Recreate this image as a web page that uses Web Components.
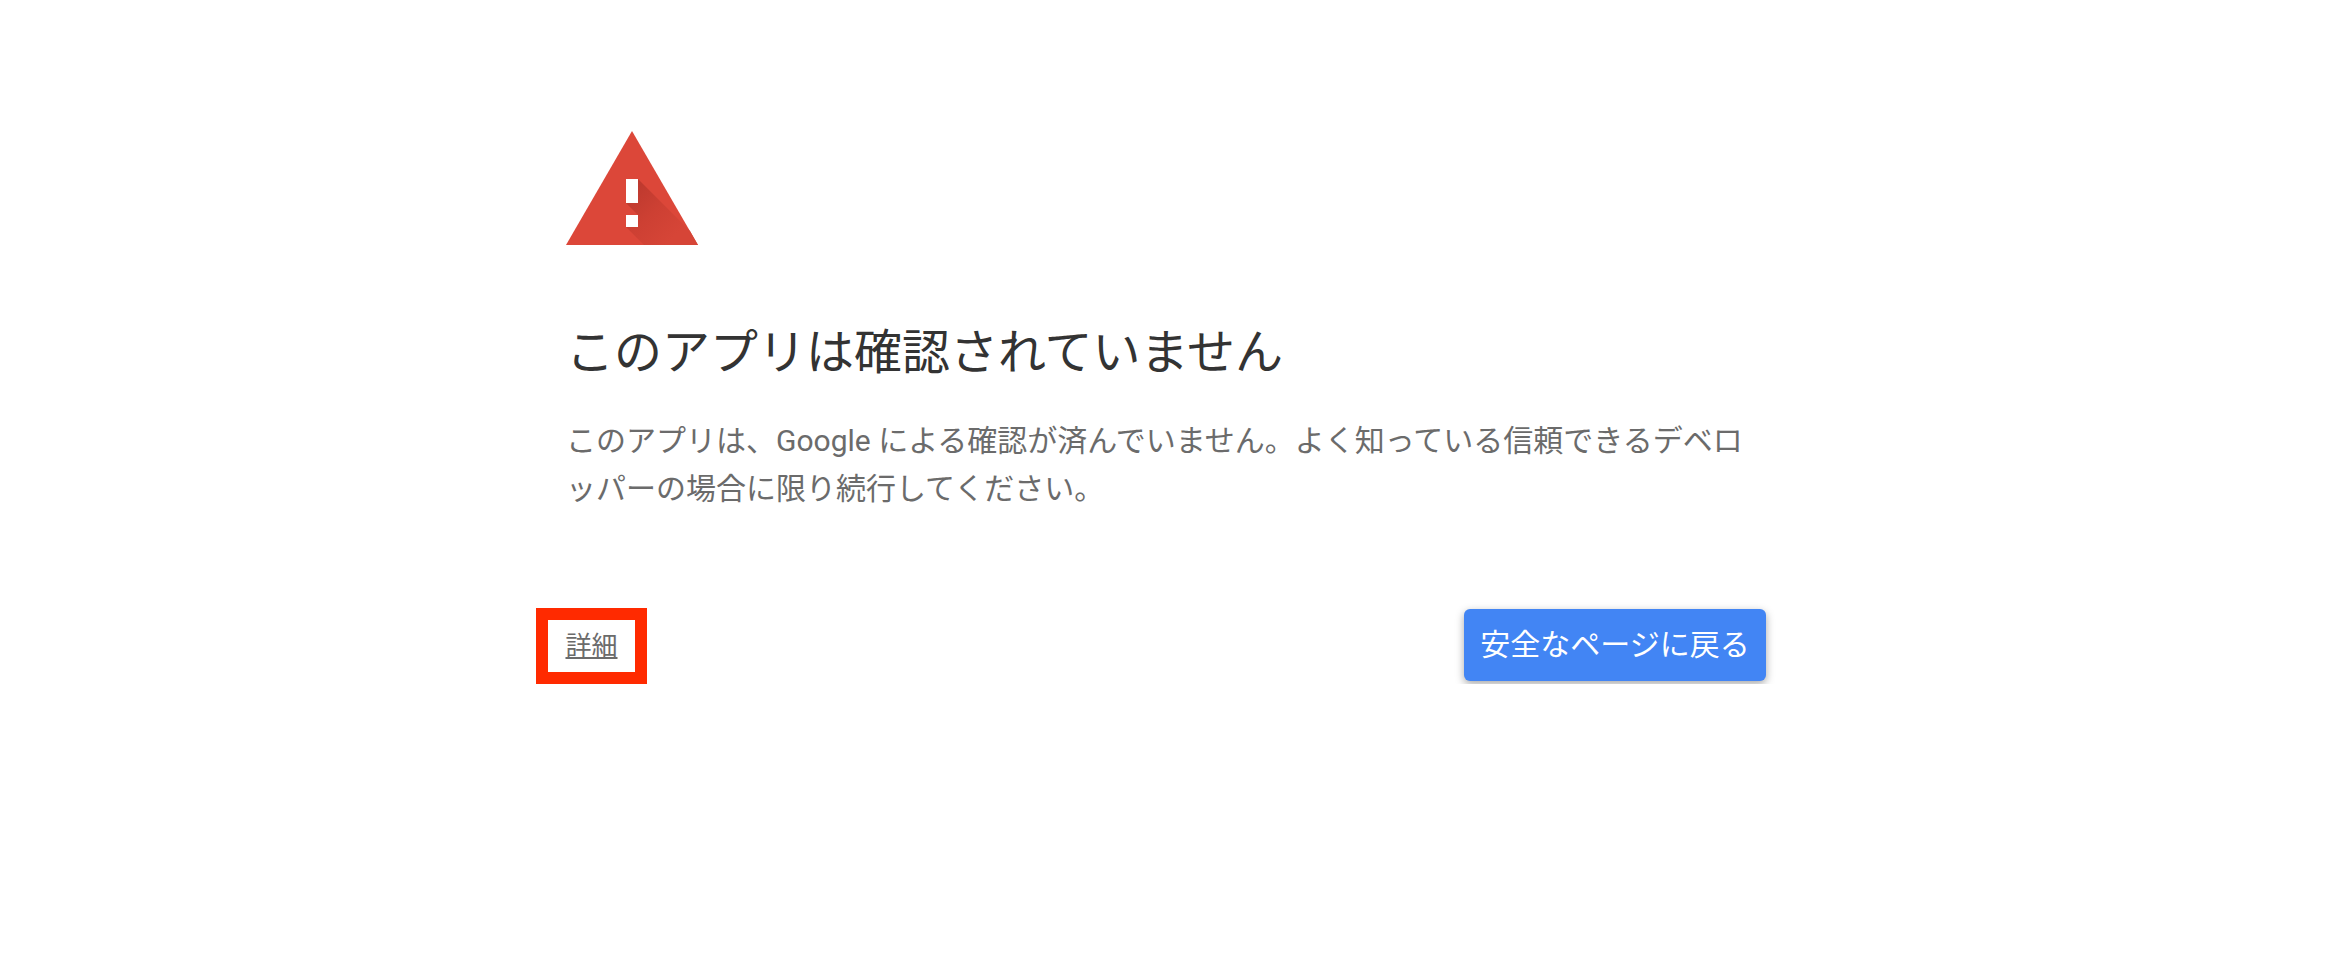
<!DOCTYPE html>
<html lang="ja">
<head>
<meta charset="utf-8">
<title>このアプリは確認されていません</title>
<style>
  html, body { margin: 0; background: #fff; }
  body { font-family: Roboto, "Noto Sans CJK JP", sans-serif; }
</style>
</head>
<body>
<consent-screen>
  <warning-icon slot="icon"></warning-icon>
  <span slot="title">このアプリは確認されていません</span>
  <span slot="message">このアプリは、Google による確認が済んでいません。よく知っている信頼できるデベロ<br>ッパーの場合に限り続行してください。</span>
  <details-link slot="details">詳細</details-link>
  <back-button slot="back">安全なページに戻る</back-button>
</consent-screen>
<script>
class WarningIcon extends HTMLElement {
  constructor() {
    super();
    this.attachShadow({ mode: 'open' });
    this.shadowRoot.innerHTML = `
      <style>
        :host { display: block; width: 132px; height: 114px; }
        svg { display: block; }
      </style>
      <svg width="132" height="114" viewBox="566 131 132 114">
        <defs>
          <linearGradient id="shade" gradientUnits="userSpaceOnUse" x1="630" y1="190" x2="675" y2="235">
            <stop offset="0" stop-color="#bd392e"/>
            <stop offset=".5" stop-color="#cd4033"/>
            <stop offset="1" stop-color="#d64537"/>
          </linearGradient>
        </defs>
        <polygon points="632,131 698,245 566,245" fill="#dc4739"/>
        <polygon points="638,179 690,231 698,245 644,245 626,227 638,227 638,215 626,203" fill="url(#shade)"/>
        <rect x="626" y="179" width="12" height="24" fill="#fff"/>
        <rect x="626" y="215" width="12" height="12" fill="#fff"/>
      </svg>`;
  }
}

class DetailsLink extends HTMLElement {
  constructor() {
    super();
    this.attachShadow({ mode: 'open' });
    this.shadowRoot.innerHTML = `
      <style>
        :host {
          display: flex;
          align-items: center;
          justify-content: center;
          box-sizing: border-box;
          width: 111px;
          height: 76px;
          padding-bottom: 5px;
          border: 12px solid #ff2a00;
          font-size: 26px;
          color: #6b6b6b;
        }
        a { color: inherit; text-decoration: underline; }
      </style>
      <a href="#"><slot></slot></a>`;
  }
}

class BackButton extends HTMLElement {
  constructor() {
    super();
    this.attachShadow({ mode: 'open' });
    this.shadowRoot.innerHTML = `
      <style>
        :host {
          display: flex;
          align-items: center;
          justify-content: center;
          box-sizing: border-box;
          width: 302px;
          height: 72px;
          margin-top: 1px;
          padding-bottom: 6px;
          background: #4285f4;
          border-radius: 6px;
          box-shadow: 0 3px 8px rgba(0,0,0,.35);
          font-size: 30px;
          color: #fff;
        }
      </style>
      <slot></slot>`;
  }
}

class ConsentScreen extends HTMLElement {
  constructor() {
    super();
    this.attachShadow({ mode: 'open' });
    this.shadowRoot.innerHTML = `
      <style>
        :host { display: block; width: 1230px; padding: 131px 0 0 536px; }
        .icon { margin-left: 30px; }
        h1 {
          margin: 73px 0 0 30px;
          font-size: 48px;
          line-height: 70px;
          font-weight: 400;
          color: #333;
          white-space: nowrap;
        }
        p {
          margin: 29px 0 0 30px;
          font-size: 30px;
          line-height: 48px;
          color: #6b6b6b;
          white-space: nowrap;
        }
        .actions {
          display: flex;
          justify-content: space-between;
          align-items: flex-start;
          margin-top: 95px;
        }
      </style>
      <div class="icon"><slot name="icon"></slot></div>
      <h1><slot name="title"></slot></h1>
      <p><slot name="message"></slot></p>
      <div class="actions">
        <slot name="details"></slot>
        <slot name="back"></slot>
      </div>`;
  }
}

customElements.define('warning-icon', WarningIcon);
customElements.define('details-link', DetailsLink);
customElements.define('back-button', BackButton);
customElements.define('consent-screen', ConsentScreen);
</script>
</body>
</html>
